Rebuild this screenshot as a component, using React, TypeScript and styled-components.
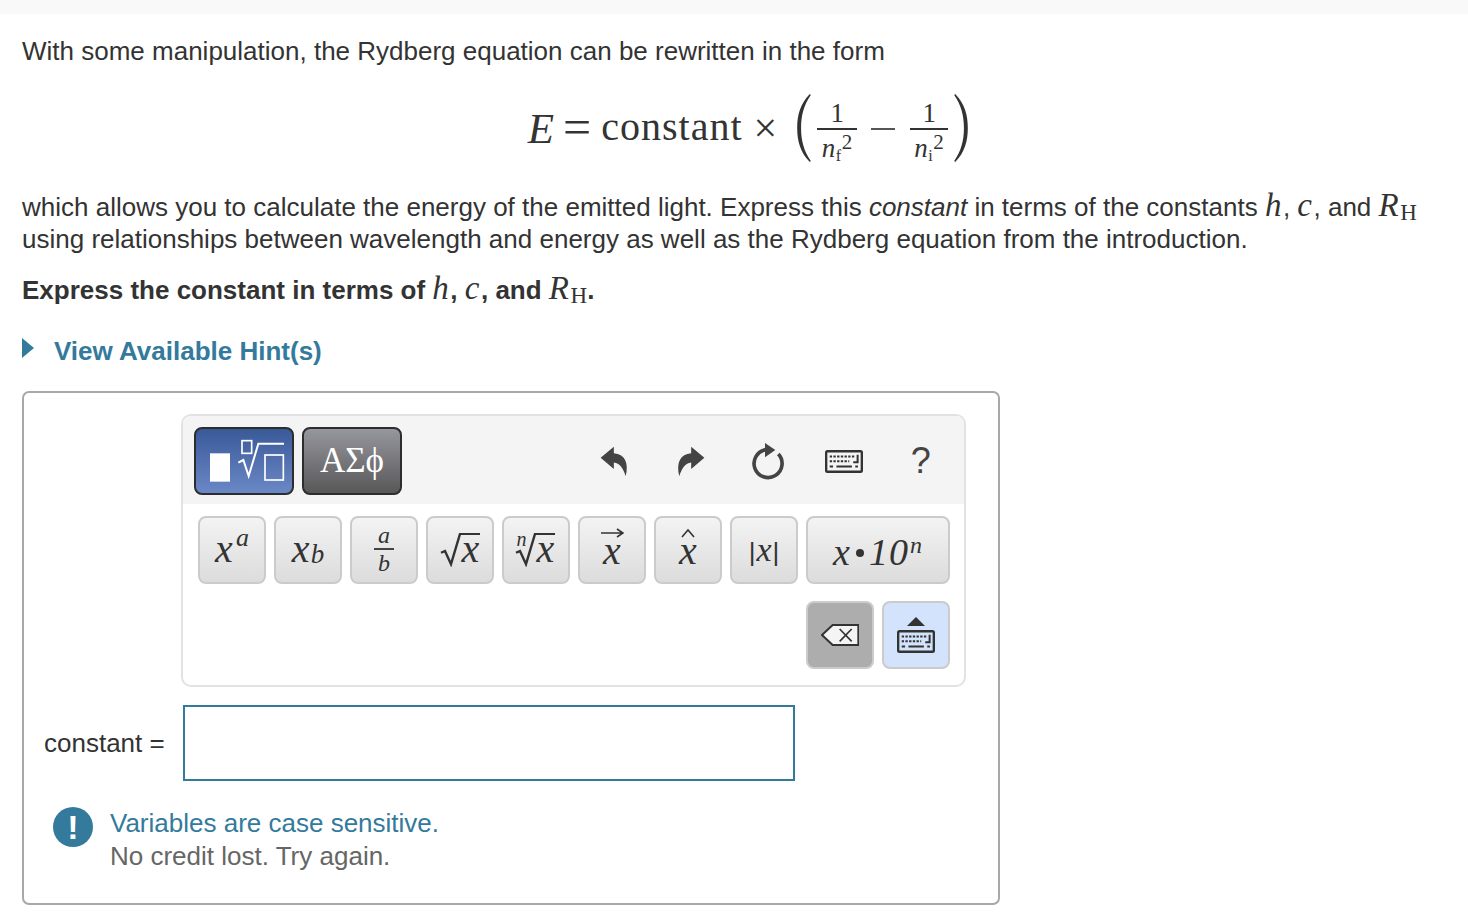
import React from "react";
import styled, { createGlobalStyle } from "styled-components";

const Global = createGlobalStyle`
  html, body { margin: 0; padding: 0; background: #fff; overflow: hidden; }
  body { font-family: "Liberation Sans", Arial, sans-serif; color: #333; font-size: 26px; line-height: 32px; }
  * { box-sizing: border-box; }
`;
const serif = `"Liberation Serif", "Times New Roman", serif`;

const Page = styled.div`width: 1468px; height: 912px; overflow: hidden;`;
const TopBar = styled.div`height: 14px; background: #f9f9f9;`;
const Content = styled.main`padding: 21px 0 0 22px;`;
const Para = styled.p`margin: 0; white-space: nowrap;`;
const BoldPara = styled(Para)`margin-top: 19px; font-weight: 700;`;
const M = styled.span`font-family: ${serif}; font-style: italic; font-weight: 400; font-size: 33px; line-height: 0; letter-spacing: 1.5px;`;
const MSub = styled.sub`font-family: ${serif}; font-style: normal; font-weight: 400; font-size: 23px; line-height: 0; vertical-align: -4px; letter-spacing: 0;`;

const Equation = styled.div`
  margin: 23px 0 25px; height: 76px; width: 1454px;
  display: flex; align-items: center; justify-content: center;
  font-family: ${serif}; color: #333; font-size: 40px;
`;
const EqE = styled.i`font-size: 43px; line-height: 1; margin-right: 9px;`;
const EqEquals = styled.span`font-size: 50px; line-height: 1; margin-top: -3px;`;
const EqWord = styled.span`letter-spacing: 1px; margin: -2px 11px 0 10px;`;
const EqTimes = styled.span`font-size: 42px; margin-right: 18px; line-height: 1;`;
const Frac = styled.div<{ $w: number }>`
  width: ${p => p.$w}px; display: flex; flex-direction: column; align-items: center;
  font-size: 27px; line-height: 30px; margin: 2px 5px 0;
`;
const FracTop = styled.div`height: 32px; width: 100%; text-align: center; border-bottom: 2px solid #333;`;
const FracBottom = styled.div`height: 30px; padding-top: 3px; white-space: nowrap; font-style: italic; letter-spacing: .5px;`;
const TinySub = styled.sub`font-size: 16px; font-style: normal; line-height: 0; vertical-align: -4px;`;
const TinySup = styled.sup`font-size: 21px; font-style: normal; line-height: 0; vertical-align: 8px;`;
const EqMinus = styled.span`width: 24px; height: 2px; margin: 2px 10px 0 9px; background: #555;`;

const Hint = styled.div`margin-top: 29px; display: flex; align-items: center; gap: 20px; font-weight: 700; color: #337a9c;`;
const HintArrow = styled.span`
  width: 0; height: 0; margin-top: -6px;
  border-left: 12px solid #337a9c; border-top: 10px solid transparent; border-bottom: 10px solid transparent;
`;

const AnswerBox = styled.section`
  margin-top: 24px; width: 978px; height: 514px;
  border: 2px solid #a8a8a8; border-radius: 7px;
  padding: 21px 0 0 0;
`;
const Panel = styled.div`
  margin-left: 157px; width: 785px; height: 273px;
  border: 2px solid #e2e2e2; border-radius: 10px; overflow: hidden;
`;
const Toolbar = styled.div`
  height: 88px; background: #f4f4f4; padding: 11px 5px 0 11px;
  display: flex; justify-content: space-between; align-items: flex-start;
`;
const TabGroup = styled.div`display: flex; gap: 8px;`;
const Tab = styled.div<{ $kind: "blue" | "grey" }>`
  width: 100px; height: 68px; border-radius: 8px; border: 2px solid #2d2d2d;
  display: flex; align-items: center; justify-content: center; color: #fff;
  font-family: ${serif}; font-size: 35px;
  background: ${p => p.$kind === "blue"
    ? "linear-gradient(#3a5998, #6b88c6)"
    : "linear-gradient(#96969e, #585858)"};
`;
const Tools = styled.div`display: flex;`;
const Tool = styled.div`
  width: 76.5px; height: 68px; display: flex; align-items: center; justify-content: center;
  color: #444; font-size: 36px;
`;
const Rows = styled.div`padding: 12px 14px 0 15px; display: flex; flex-direction: column; gap: 17px;`;
const Row = styled.div<{ $end?: boolean }>`
  display: flex; gap: 8px; justify-content: ${p => (p.$end ? "flex-end" : "flex-start")};
`;
const Key = styled.div<{ $wide?: boolean; $tone?: "plain" | "dark" | "blue" }>`
  width: ${p => (p.$wide ? 144 : 68)}px; height: 68px; border-radius: 8px;
  border: 2px solid #cbcbcb;
  background: ${p => p.$tone === "dark" ? "#adadad" : p.$tone === "blue" ? "#d2e3fb" : "linear-gradient(#f3f3f3, #dcdcdc)"};
  display: flex; align-items: center; justify-content: center;
  font-family: ${serif}; font-style: italic; color: #333; font-size: 40px; line-height: 1;
`;
const KSup = styled.span`font-size: 26px; align-self: flex-start; margin: -3px 0 0 3px; line-height: 24px;`;
const KSub = styled.span`font-size: 27px; margin: 10px 0 0 1px; line-height: 24px;`;
const Base = styled.div`display: flex; align-items: center; margin-top: -2px;`;
const FracKey = styled.div`display: flex; flex-direction: column; align-items: center; font-size: 24px; line-height: 24px; margin-top: -2px;`;
const FracKeyTop = styled.span`width: 20px; text-align: center; border-bottom: 2px solid #444; padding-bottom: 1px;`;
const FracKeyBottom = styled.span`padding-top: 1px;`;
const RootWrap = styled.div`display: flex; align-items: flex-start; height: 36px; margin-top: 2px;`;
const RootBody = styled.span`border-top: 2px solid #333; padding: 0 1px 0 0; font-size: 40px; line-height: 28px; height: 34px;`;
const RootIndex = styled.span`font-size: 20px; line-height: 18px; margin-right: -12px; margin-top: -3px;`;
const Accent = styled.div`display: flex; flex-direction: column; align-items: center; margin-top: -10px;`;
const AccentX = styled.span`line-height: 24px; font-size: 40px;`;
const Abs = styled.span`font-size: 34px;`;
const AbsBar = styled.span`font-family: "Liberation Sans", sans-serif; font-style: normal; font-size: 26px; font-weight: 400; margin: 0 1px;`;
const Sci = styled.div`display: flex; align-items: center; font-size: 38px; letter-spacing: 1px; margin-top: 3px;`;
const SciSup = styled.span`font-size: 24px; margin: -14px 0 0 1px;`;
const SciDot = styled.span`width: 8px; height: 8px; border-radius: 50%; background: #333; margin: 2px 5px 0 5px;`;
const KeyStack = styled.div`display: flex; flex-direction: column; align-items: center; gap: 4px;`;

const AnswerRow = styled.div`margin-top: 18px; display: grid; grid-template-columns: 159px 612px; align-items: center;`;
const AnswerLabel = styled.label`padding-left: 20px; white-space: nowrap;`;
const AnswerInput = styled.div`height: 76px; border: 2px solid #337a9c;`;
const Feedback = styled.div`margin: 26px 0 0 29px; display: flex; gap: 17px; line-height: 33px;`;
const Badge = styled.div`
  width: 40px; height: 40px; border-radius: 50%; background: #337a9c; color: #fff;
  display: flex; align-items: center; justify-content: center; font-weight: 700; font-size: 34px;
`;
const FeedbackTitle = styled.div`color: #337a9c;`;
const FeedbackNote = styled.div`color: #666;`;

const Paren = ({ flip }: { flip?: boolean }) => (
  <svg width="17" height="70" viewBox="0 0 17 72" style={flip ? { transform: "scaleX(-1)" } : undefined}>
    <path d="M15 1 C5 11 2 23 2 36 C2 49 5 61 15 71 L16 70 C9 60 6 49 6 36 C6 23 9 12 16 2 Z" fill="#333" />
  </svg>
);

const KeyboardIcon = () => (
  <svg width="38" height="23" viewBox="0 0 113 68">
    <rect x="3.5" y="3.5" width="106" height="61" rx="4" fill="none" stroke="#333" strokeWidth="7" />
    <path d="M14 19 H88" stroke="#333" strokeWidth="6" strokeDasharray="7 4" />
    <path d="M14 33 H72" stroke="#333" strokeWidth="6" strokeDasharray="7 4" />
    <path d="M14 49 H24 M34 49 H80 M90 49 H98 M97 14 V36 H84" stroke="#333" strokeWidth="6" fill="none" />
  </svg>
);

const Radical = () => (
  <svg width="22" height="34" viewBox="0 0 22 36" preserveAspectRatio="none">
    <path d="M1 21 L5 19 L11 33 L20 1 H22" fill="none" stroke="#333" strokeWidth="2.4" />
  </svg>
);

export default function App() {
  return (
    <Page>
      <Global />
      <TopBar />
      <Content>
        <Para>With some manipulation, the Rydberg equation can be rewritten in the form</Para>
        <Equation>
          <EqE>E</EqE>
          <EqEquals>=</EqEquals>
          <EqWord>constant</EqWord>
          <EqTimes>×</EqTimes>
          <Paren />
          <Frac $w={40}>
            <FracTop>1</FracTop>
            <FracBottom>n<TinySub>f</TinySub><TinySup>2</TinySup></FracBottom>
          </Frac>
          <EqMinus />
          <Frac $w={38}>
            <FracTop>1</FracTop>
            <FracBottom>n<TinySub>i</TinySub><TinySup>2</TinySup></FracBottom>
          </Frac>
          <Paren flip />
        </Equation>
        <Para>
          which allows you to calculate the energy of the emitted light. Express this <em>constant</em> in terms of the constants <M>h</M>, <M>c</M>, and <M>R</M><MSub>H</MSub>
          <br />
          using relationships between wavelength and energy as well as the Rydberg equation from the introduction.
        </Para>
        <BoldPara>
          Express the constant in terms of <M>h</M>, <M>c</M>, and <M>R</M><MSub>H</MSub>.
        </BoldPara>
        <Hint><HintArrow />View Available Hint(s)</Hint>

        <AnswerBox>
          <Panel>
            <Toolbar>
              <TabGroup>
                <Tab $kind="blue">
                  <svg width="96" height="64" viewBox="48 57 288 192">
                    <rect x="90" y="130" width="60" height="85" fill="#fff" />
                    <rect x="186" y="92" width="29" height="38" fill="none" stroke="#fff" strokeWidth="5" />
                    <path d="M175 158 L190 150 L206 198 L235 101 H312" fill="none" stroke="#fff" strokeWidth="6" />
                    <rect x="255" y="135" width="55" height="75" fill="none" stroke="#fff" strokeWidth="5" />
                  </svg>
                </Tab>
                <Tab $kind="grey">ΑΣϕ</Tab>
              </TabGroup>
              <Tools>
                <Tool>
                  <svg width="33" height="37" viewBox="84 96 100 110">
                    <path d="M92 140 L132 106 V126 C165 128 178 155 168 196 C160 170 150 156 132 154 V174 Z" fill="#444" />
                  </svg>
                </Tool>
                <Tool>
                  <svg width="33" height="37" viewBox="316 96 100 110">
                    <path d="M405 140 L365 106 V126 C332 128 319 155 329 196 C337 170 347 156 365 154 V174 Z" fill="#444" />
                  </svg>
                </Tool>
                <Tool>
                  <svg width="36" height="40" viewBox="540 92 108 120">
                    <path d="M625 131 A42 42 0 1 1 588 118" fill="none" stroke="#444" strokeWidth="11" />
                    <path d="M585 98 L616 119 L585 141 Z" fill="#444" />
                  </svg>
                </Tool>
                <Tool><KeyboardIcon /></Tool>
                <Tool>?</Tool>
              </Tools>
            </Toolbar>
            <Rows>
              <Row>
                <Key><Base>x<KSup>a</KSup></Base></Key>
                <Key><Base>x<KSub>b</KSub></Base></Key>
                <Key><FracKey><FracKeyTop>a</FracKeyTop><FracKeyBottom>b</FracKeyBottom></FracKey></Key>
                <Key><RootWrap><Radical /><RootBody>x</RootBody></RootWrap></Key>
                <Key><RootWrap><RootIndex>n</RootIndex><Radical /><RootBody>x</RootBody></RootWrap></Key>
                <Key>
                  <Accent>
                    <svg width="24" height="12" viewBox="0 0 24 12">
                      <path d="M1 6 H22 M17 2 L23 6 L17 10" fill="none" stroke="#333" strokeWidth="1.6" />
                    </svg>
                    <AccentX>x</AccentX>
                  </Accent>
                </Key>
                <Key>
                  <Accent>
                    <svg width="16" height="12" viewBox="0 0 16 12">
                      <path d="M2 10 L8 3 L14 10" fill="none" stroke="#333" strokeWidth="1.6" />
                    </svg>
                    <AccentX>x</AccentX>
                  </Accent>
                </Key>
                <Key><Abs><AbsBar>|</AbsBar>x<AbsBar>|</AbsBar></Abs></Key>
                <Key $wide><Sci>x<SciDot />10<SciSup>n</SciSup></Sci></Key>
              </Row>
              <Row $end>
                <Key $tone="dark">
                  <svg width="38" height="22" viewBox="750 640 114 66">
                    <path d="M753 673 L785 643 H862 V703 H785 Z" fill="#f4f4f4" stroke="#333" strokeWidth="6" />
                    <path d="M806 655 L842 692 M842 655 L806 692" stroke="#333" strokeWidth="5" />
                  </svg>
                </Key>
                <Key $tone="blue">
                  <KeyStack>
                    <svg width="18" height="9" viewBox="0 0 18 9"><path d="M0 9 L9 0 L18 9 Z" fill="#333" /></svg>
                    <KeyboardIcon />
                  </KeyStack>
                </Key>
              </Row>
            </Rows>
          </Panel>
          <AnswerRow>
            <AnswerLabel>constant =</AnswerLabel>
            <AnswerInput />
          </AnswerRow>
          <Feedback>
            <Badge>!</Badge>
            <div>
              <FeedbackTitle>Variables are case sensitive.</FeedbackTitle>
              <FeedbackNote>No credit lost. Try again.</FeedbackNote>
            </div>
          </Feedback>
        </AnswerBox>
      </Content>
    </Page>
  );
}
